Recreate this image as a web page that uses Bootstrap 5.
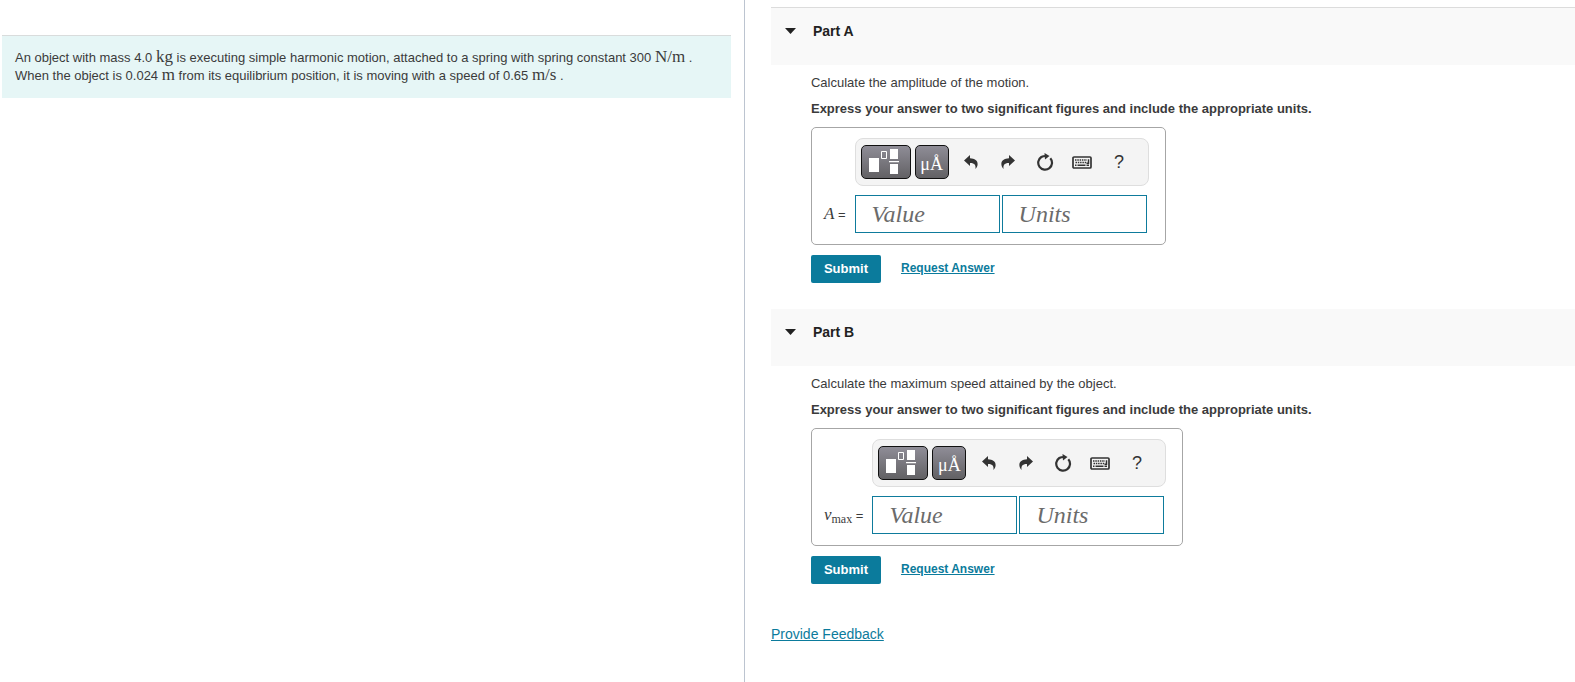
<!DOCTYPE html>
<html lang="en">
<head>
<meta charset="utf-8">
<meta name="viewport" content="width=device-width, initial-scale=1">
<title>Simple harmonic motion</title>
<link href="https://cdn.jsdelivr.net/npm/bootstrap@5.3.0/dist/css/bootstrap.min.css" rel="stylesheet">
<style>
  body { font-family: "Liberation Sans", Arial, sans-serif; font-size: 13px; line-height: 18px; color: #3b3b3b; }
  .problem-pane { width: 47.3%; border-right: 1px solid #bcc4d0; padding: 35px 13px 0 2px; }
  .intro { background: #e6f6f6; border-top: 1px solid #d9dcdc; padding: 13px; }
  .math { font-family: "Liberation Serif", serif; font-size: 17px; line-height: 14px; }
  .answer-pane { padding: 7px 0 24px 26px; min-width: 0; }
  .part-head { background: #f9f9f9; height: 57px; }
  .part-first { border-top: 1px solid #dcdcdc; height: 58px; }
  .part-toggle { border: 0; background: none; padding: 14px; gap: 17px; font-size: 14px; line-height: 18px; font-weight: 700; color: #222; }
  .part-body { padding: 9px 16px 26px 40px; }
  .express { margin: 8px 0 9px; }
  .answer-box { border: 1px solid #a6a6a6; border-radius: 5px; padding: 10px 16px 11px 12px; width: fit-content; grid-template-columns: auto auto; align-items: center; gap: 9px; }
  .toolbar { grid-column: 2; background: #f4f4f4; border: 1px solid #dedede; border-radius: 8px; padding: 6px 5px; width: 294px; height: 48px; }
  .tool-dark { height: 34px; padding: 0; border: 1px solid #111; border-radius: 5px; background: linear-gradient(#8f8d97, #626164); color: #fff; font: 18px/32px "Liberation Serif", serif; }
  .tool-wide { width: 50px; padding-right: 4px; }
  .tool-narrow { width: 34px; margin-left: 4px; padding-top: 2px; }
  .tool { width: 37px; height: 34px; border: 0; padding: 0; background: none; color: #333; font-size: 18px; }
  .tool svg { display: block; margin: auto; }
  .var { font-family: "Liberation Serif", serif; font-style: italic; font-size: 17px; }
  .var sub { font-style: normal; font-size: 12px; bottom: -3px; }
  .inputs { gap: 2px; }
  .field { width: 145px; height: 38px; border: 1px solid #0e7b9c; padding: 0 0 0 16px; font: italic 24px "Liberation Serif", serif; color: #333; }
  .field::placeholder { color: #6b6b6b; }
  .actions { margin-top: 10px; }
  .submit { background: #0b7b9c; color: #fff; border: 0; border-radius: 2px; width: 70px; height: 28px; font-size: 13px; font-weight: 700; line-height: 18px; padding: 0; }
  .submit:hover { background: #096882; color: #fff; }
  .link-teal { color: #0b7b9c; }
  .request { font-size: 12px; font-weight: 700; padding-bottom: 2px; }
  .feedback { font-size: 14px; margin-top: 15px; display: inline-block; }
</style>
</head>
<body>
<svg class="d-none" xmlns="http://www.w3.org/2000/svg">
  <symbol id="i-template" viewBox="0 0 32 26"><path fill="#fff" d="M1 9h10v14H1zM22 0h8v10h-8zM21 12h10v1.200H21zM22 15h8v10h-8z"/><path fill="none" stroke="#fff" d="M13.500 2.500h5v7h-5z"/></symbol>
  <symbol id="i-undo" viewBox="0 0 14 14"><path fill="currentColor" d="M0 5.500 6 0v3.300c4.500.2 8 2.200 7.600 6.200-.1 1.800-1 3.400-2.200 4.500.7-3.700-.8-6-5.400-5.900V11z"/></symbol>
  <symbol id="i-reset" viewBox="0 0 18 18"><path fill="none" stroke="currentColor" stroke-width="2.200" d="M14.300 5.200A6.900 6.900 0 1 1 5.300 4Q7 3 10 3"/><path fill="currentColor" d="M8.500 0l5 3-4.500 3.500z"/></symbol>
  <symbol id="i-keys" viewBox="0 0 20 13"><rect x="1" y="1" width="18" height="11" rx="1" fill="none" stroke="currentColor" stroke-width="1.700"/><path fill="none" stroke="currentColor" stroke-width="1.500" d="M3 4h12" stroke-dasharray="1.500 .8"/><path fill="none" stroke="currentColor" stroke-width="1.500" d="M3.500 6.500h11" stroke-dasharray="1.500 .8"/><path fill="none" stroke="currentColor" stroke-width="1.500" d="M16.500 3.200v4h-2M3 9.300h1.500M5.500 9.300h8M14.500 9.300h2.500"/></symbol>
</svg>
<div class="d-flex min-vh-100">
  <aside class="problem-pane flex-shrink-0">
    <div class="intro">An object with mass 4.0 <span class="math">kg</span> is executing simple harmonic motion, attached to a spring with spring constant 300 <span class="math">N/m</span> . When the object is 0.024 <span class="math">m</span> from its equilibrium position, it is moving with a speed of 0.65 <span class="math">m/s</span> .</div>
  </aside>
  <main class="answer-pane flex-grow-1">
    <section>
      <div class="part-head part-first">
        <button type="button" class="part-toggle d-flex align-items-center"><svg width="11" height="6" viewBox="0 0 11 6"><path fill="#222" d="M0 0h11L5.500 6z"/></svg>Part A</button>
      </div>
      <div class="part-body">
        <p class="mb-0">Calculate the amplitude of the motion.</p>
        <p class="express fw-bold">Express your answer to two significant figures and include the appropriate units.</p>
        <div class="answer-box d-grid">
          <div class="toolbar d-flex align-items-center">
            <button type="button" class="tool-dark tool-wide d-flex justify-content-center align-items-center" aria-label="Templates"><svg width="32" height="26"><use href="#i-template"/></svg></button>
            <button type="button" class="tool-dark tool-narrow me-1">μÅ</button>
            <button type="button" class="tool" aria-label="Undo"><svg width="14" height="14"><use href="#i-undo"/></svg></button>
            <button type="button" class="tool" aria-label="Redo"><svg width="14" height="14" viewBox="0 0 14 14"><use href="#i-undo" transform="matrix(-1 0 0 1 14 0)" width="14" height="14"/></svg></button>
            <button type="button" class="tool" aria-label="Reset"><svg width="18" height="18"><use href="#i-reset"/></svg></button>
            <button type="button" class="tool" aria-label="Keyboard"><svg width="20" height="13"><use href="#i-keys"/></svg></button>
            <button type="button" class="tool">?</button>
          </div>
          <label for="value-a"><span class="var">A</span> =</label>
          <div class="inputs d-flex">
            <input id="value-a" class="field" type="text" placeholder="Value">
            <input class="field" type="text" placeholder="Units" aria-label="Units for part A">
          </div>
        </div>
        <div class="actions d-flex align-items-center">
          <button type="button" class="btn submit">Submit</button>
          <a href="#" class="link-teal request ms-3 ps-1">Request Answer</a>
        </div>
      </div>
    </section>
    <section>
      <div class="part-head">
        <button type="button" class="part-toggle d-flex align-items-center"><svg width="11" height="6" viewBox="0 0 11 6"><path fill="#222" d="M0 0h11L5.500 6z"/></svg>Part B</button>
      </div>
      <div class="part-body">
        <p class="mb-0">Calculate the maximum speed attained by the object.</p>
        <p class="express fw-bold">Express your answer to two significant figures and include the appropriate units.</p>
        <div class="answer-box d-grid">
          <div class="toolbar d-flex align-items-center">
            <button type="button" class="tool-dark tool-wide d-flex justify-content-center align-items-center" aria-label="Templates"><svg width="32" height="26"><use href="#i-template"/></svg></button>
            <button type="button" class="tool-dark tool-narrow me-1">μÅ</button>
            <button type="button" class="tool" aria-label="Undo"><svg width="14" height="14"><use href="#i-undo"/></svg></button>
            <button type="button" class="tool" aria-label="Redo"><svg width="14" height="14" viewBox="0 0 14 14"><use href="#i-undo" transform="matrix(-1 0 0 1 14 0)" width="14" height="14"/></svg></button>
            <button type="button" class="tool" aria-label="Reset"><svg width="18" height="18"><use href="#i-reset"/></svg></button>
            <button type="button" class="tool" aria-label="Keyboard"><svg width="20" height="13"><use href="#i-keys"/></svg></button>
            <button type="button" class="tool">?</button>
          </div>
          <label for="value-b"><span class="var">v<sub>max</sub></span> =</label>
          <div class="inputs d-flex">
            <input id="value-b" class="field" type="text" placeholder="Value">
            <input class="field" type="text" placeholder="Units" aria-label="Units for part B">
          </div>
        </div>
        <div class="actions d-flex align-items-center">
          <button type="button" class="btn submit">Submit</button>
          <a href="#" class="link-teal request ms-3 ps-1">Request Answer</a>
        </div>
      </div>
    </section>
    <a href="#" class="link-teal feedback">Provide Feedback</a>
  </main>
</div>
<script src="https://cdn.jsdelivr.net/npm/bootstrap@5.3.0/dist/js/bootstrap.bundle.min.js"></script>
</body>
</html>
